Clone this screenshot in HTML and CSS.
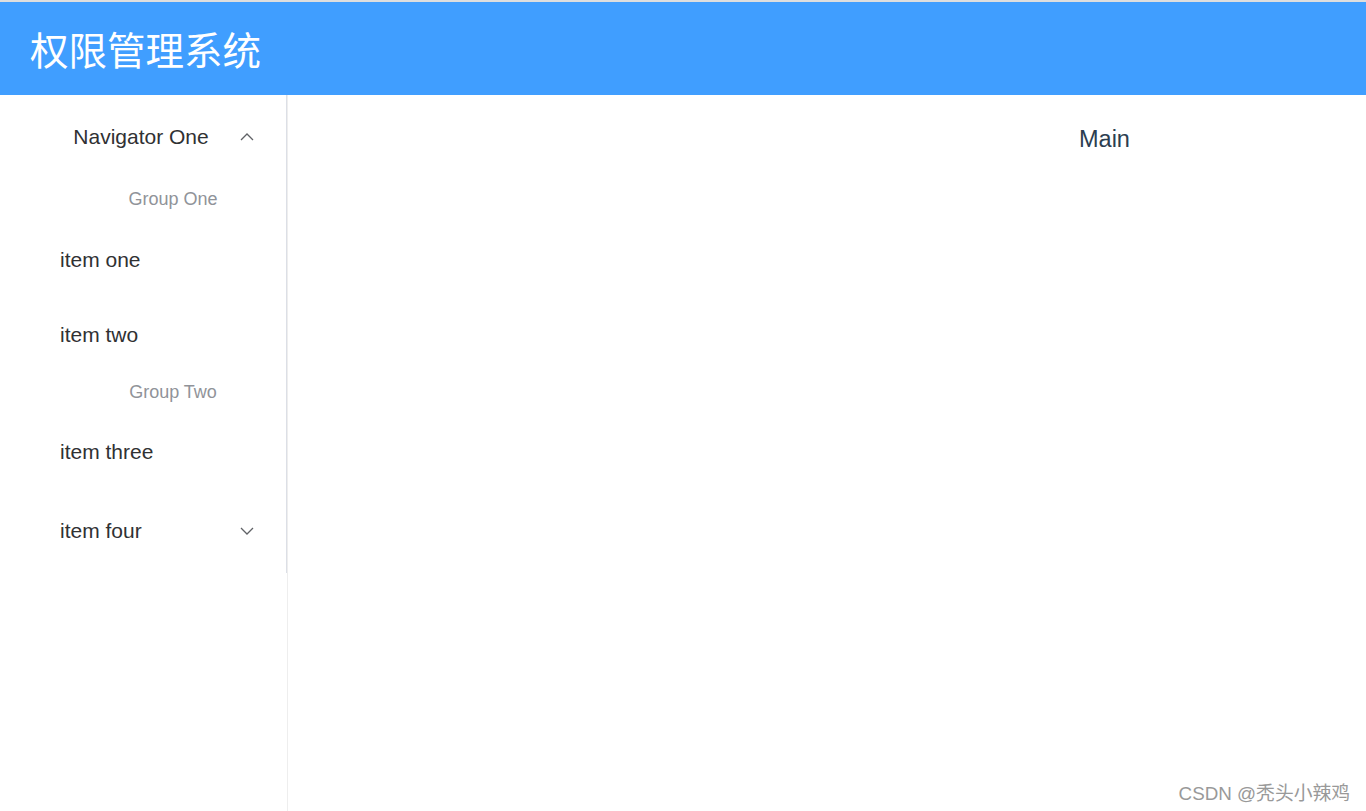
FILE: index.html
```html
<!doctype html>
<html lang="zh-CN">
  <head>
    <meta charset="UTF-8" />
    <meta name="viewport" content="width=device-width, initial-scale=1.0" />
    <title>权限管理系统</title>
    <link rel="stylesheet" href="styles.css">
  </head>
  <body>
    <div id="app">
      <div class="top-strip"></div>
      <header class="app-header">
        <h1 class="app-title">权限管理系统</h1>
      </header>

      <div class="app-body">
        <aside class="app-aside">
          <ul class="menu">
            <li class="submenu is-open">
              <div class="submenu-title centered">
                <span>Navigator One</span>
                <svg class="arrow" width="14" height="8" viewBox="0 0 14 8">
                  <path d="M1 7 L7 1 L13 7" fill="none" stroke="#606266" stroke-width="1.3" />
                </svg>
              </div>
              <ul class="submenu-list">
                <li class="group-title">Group One</li>
                <li class="menu-item">item one</li>
                <li class="menu-item">item two</li>
                <li class="group-title">Group Two</li>
                <li class="menu-item">item three</li>
              </ul>
            </li>
            <li class="submenu">
              <div class="submenu-title">
                <span>item four</span>
                <svg class="arrow" width="14" height="8" viewBox="0 0 14 8">
                  <path d="M1 1 L7 7 L13 1" fill="none" stroke="#606266" stroke-width="1.3" />
                </svg>
              </div>
            </li>
          </ul>
        </aside>

        <main class="app-main">
          <p class="main-text">Main</p>
        </main>
      </div>

      <div class="watermark">CSDN @秃头小辣鸡</div>
    </div>
  </body>
</html>
```

FILE: styles.css
```css
:root {
  --primary-color: #409eff;
  --text-color: #303133;
  --group-color: #909399;
  --border-color: #e6e6e6;
}

* {
  margin: 0;
  padding: 0;
  box-sizing: border-box;
}

html,
body {
  height: 100%;
}

body {
  font-family: 'Liberation Sans', Arial, 'Noto Sans CJK SC', sans-serif;
  color: #2c3e50;
  background: #fff;
  overflow: hidden;
}

#app {
  height: 100%;
  display: flex;
  flex-direction: column;
}

.top-strip {
  height: 2px;
  background: #dedede;
}

.app-header {
  height: 93px;
  background-color: var(--primary-color);
  display: flex;
  align-items: center;
  padding-left: 30px;
}

.app-title {
  font-family: 'Noto Sans CJK SC', sans-serif;
  font-size: 38.5px;
  font-weight: 400;
  color: #fff;
  line-height: 1;
}

.app-body {
  flex: 1;
  display: flex;
}

.app-aside {
  width: 288px;
  border-right: 1px solid #eeeeee;
}

.menu {
  list-style: none;
  width: 287px;
  border-right: 1px solid #dcdfe6;
}

.submenu-list {
  list-style: none;
}

.submenu-title {
  position: relative;
  height: 84px;
  line-height: 84px;
  padding-left: 60px;
  font-size: 21px;
  color: var(--text-color);
}

.submenu-title.centered {
  padding: 0 32px 0 28px;
  text-align: center;
}

.arrow {
  position: absolute;
  right: 32px;
  top: 50%;
  margin-top: -4px;
}

.group-title {
  padding: 10px 0 11.5px 60px;
  line-height: 21px;
  font-size: 18px;
  color: var(--group-color);
  text-align: center;
}

.menu-item {
  height: 75px;
  line-height: 75px;
  padding-left: 60px;
  font-size: 21px;
  color: var(--text-color);
}

.app-main {
  flex: 1;
  padding: 30px 0 0 791px;
}

.main-text {
  font-size: 23.5px;
  line-height: 28px;
  color: #2c3e50;
}

.watermark {
  position: absolute;
  right: 16px;
  bottom: 6px;
  font-family: 'Liberation Sans', 'Noto Sans CJK SC', sans-serif;
  font-size: 18.8px;
  color: #999;
  text-shadow: 0 0 2px #fff;
}
```
